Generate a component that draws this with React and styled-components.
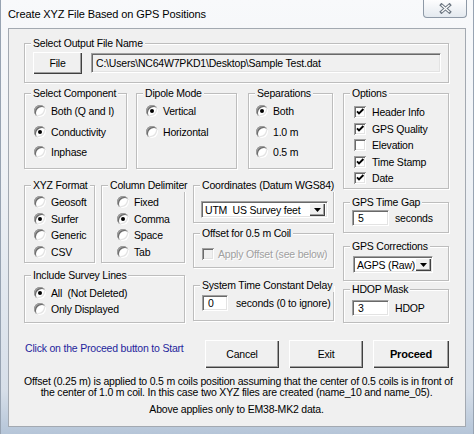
import React from 'react';
import styled, { createGlobalStyle } from 'styled-components';

const Global = createGlobalStyle`
  html, body { margin: 0; padding: 0; background: #fff; }
  body {
    width: 474px; height: 434px; overflow: hidden;
    font-family: "Liberation Sans", Arial, sans-serif;
    font-size: 10.5px; letter-spacing: -0.2px; color: #000;
  }
  * { box-sizing: border-box; }
`;

const Window = styled.div`
  width: 474px; height: 434px;
  display: flex; flex-direction: column;
  padding: 0 8px 7px 8px;
  background: linear-gradient(180deg, #f8f9fb 0px, #eef1f5 180px, #d7dfe9 390px, #b5c5d8 434px);
  box-shadow: inset 1px 0 0 #97a3b2, inset -1px 0 0 #97a3b2;
`;

const TitleBar = styled.div`
  height: 28px; flex: none;
  display: flex; align-items: flex-start; justify-content: space-between;
`;

const Title = styled.div`
  margin-top: 8px;
  font-size: 11px; letter-spacing: -0.1px; line-height: 12px;
  color: #000;
`;

const CloseBtn = styled.div`
  width: 44px; height: 18px; margin-right: -1px;
  border: 1px solid #8e99a7; border-top: none;
  border-radius: 0 0 4px 4px;
  background: linear-gradient(180deg, #fdfdfe, #e4e9ef);
  display: flex; align-items: center; justify-content: center;
`;

const Client = styled.div`
  flex: 1;
  border: 1px solid #a3a9b1;
  background: #f0f0f0;
  padding: 14px 16px 0 15px;
  display: flex; flex-direction: column;
`;

const Box = styled.div`
  position: relative; flex: none;
  width: ${p => p.$w}px; height: ${p => p.$h}px;
  margin-left: ${p => p.$ml || 0}px;
  border: 1px solid #bdbdbd;
  box-shadow: inset 1px 1px 0 #fff, 1px 1px 0 #fff;
  padding: ${p => p.$pad || '0'};
  display: flex; flex-direction: ${p => p.$row ? 'row' : 'column'};
  align-items: ${p => p.$row ? 'center' : 'stretch'};
  gap: ${p => p.$gap || 0}px;
`;

const Legend = styled.span`
  position: absolute; top: -7px; left: 6px;
  padding: 0 2px; background: #f0f0f0;
  line-height: 13px; white-space: nowrap;
`;

const Group = ({ label, children, ...rest }) => (
  <Box {...rest}>
    <Legend>{label}</Legend>
    {children}
  </Box>
);

const Main = styled.div`
  display: flex; align-items: flex-start; gap: 9px;
  margin-top: 10px;
`;

const Column = styled.div`
  display: flex; flex-direction: column;
  width: ${p => p.$w}px; flex: none;
`;

const Row = styled.div`
  display: flex; align-items: flex-start;
  gap: ${p => p.$gap || 0}px;
  margin-top: ${p => p.$mt || 0}px;
`;

const Spacer = styled.div`
  height: ${p => p.$h}px; flex: none;
`;

const ChoiceRow = styled.div`
  display: flex; align-items: center; gap: ${p => p.$gap || 5}px;
  height: 14px; line-height: 14px; white-space: pre;
  color: ${p => p.$disabled ? '#a0a0a0' : '#000'};
  text-shadow: ${p => p.$disabled ? '1px 1px 0 #fff' : 'none'};
`;

const RadioMark = styled.span`
  width: 12px; height: 12px; flex: none; position: relative;
  border-radius: 50%; background: #fff;
  box-shadow: inset 1px 1px 0 #a0a0a0, inset -1px -1px 0 #fff,
    inset 2px 2px 0 #6b6b6b, inset -2px -2px 0 #e3e3e3;
  &::after {
    content: ''; display: ${p => p.$on ? 'block' : 'none'};
    position: absolute; left: 4px; top: 4px;
    width: 4px; height: 4px; border-radius: 50%; background: #000;
  }
`;

const CheckMark = styled.span`
  width: 12px; height: 12px; flex: none;
  display: flex; align-items: center; justify-content: center;
  background: ${p => p.$disabled ? '#f0f0f0' : '#fff'};
  box-shadow: inset 1px 1px 0 #a0a0a0, inset -1px -1px 0 #fff,
    inset 2px 2px 0 #6b6b6b, inset -2px -2px 0 #e3e3e3;
`;

const Choice = ({ type = 'radio', on, disabled, gap, children }) => (
  <ChoiceRow $disabled={disabled} $gap={gap}>
    {type === 'radio' ? (
      <RadioMark $on={on} />
    ) : (
      <CheckMark $disabled={disabled}>
        {on && (
          <svg width="12" height="12" viewBox="0 0 12 12">
            <path d="M3 5.4 L5 7.4 L9.4 3" stroke="#000" strokeWidth="1.9" fill="none" />
          </svg>
        )}
      </CheckMark>
    )}
    <span>{children}</span>
  </ChoiceRow>
);

const sunken = `
  border: 1px solid; border-color: #a0a0a0 #fff #fff #a0a0a0;
  box-shadow: inset 1px 1px 0 #696969, inset -1px -1px 0 #e3e3e3;
`;

const Field = styled.div`
  ${sunken}
  width: ${p => p.$w}px; height: ${p => p.$h || 16}px; flex: none;
  background: ${p => p.$ro ? '#f0f0f0' : '#fff'};
  padding-left: ${p => p.$pl || 4}px;
  display: flex; align-items: center;
  white-space: pre; line-height: 12px;
`;

const SelectBox = styled.div`
  ${sunken}
  width: ${p => p.$w}px; height: 17px; flex: none;
  background: #fff;
  display: flex; align-items: center; justify-content: space-between;
  padding: 2px 2px 2px 3px;
  white-space: pre;
`;

const ArrowBtn = styled.span`
  width: 16px; height: 13px; flex: none;
  background: #f0f0f0;
  box-shadow: inset 1px 1px 0 #fff, inset -1px -1px 0 #404040, inset -2px -2px 0 #a0a0a0;
  display: flex; align-items: center; justify-content: center;
`;

const Select = ({ w, children }) => (
  <SelectBox $w={w}>
    <span>{children}</span>
    <ArrowBtn>
      <svg width="7" height="4" viewBox="0 0 7 4"><path d="M0 0 H7 L3.5 4 Z" fill="#000" /></svg>
    </ArrowBtn>
  </SelectBox>
);

const Unit = styled.span`
  margin-left: ${p => p.$ml}px; white-space: nowrap; line-height: 12px;
`;

const Btn = styled.button`
  width: ${p => p.$w}px; height: ${p => p.$h || 28}px; flex: none;
  border: none; padding: 0; margin: 0;
  background: #f0f0f0;
  font-family: "Liberation Sans", Arial, sans-serif;
  font-size: ${p => p.$bold ? '11px' : '10.5px'};
  font-weight: ${p => p.$bold ? 700 : 400};
  letter-spacing: -0.2px; color: #000;
  box-shadow: inset 1px 1px 0 #fff, inset -1px -1px 0 #404040, inset -2px -2px 0 #a0a0a0;
`;

const ActionRow = styled.div`
  display: flex; align-items: flex-start;
  margin-top: 17px;
`;

const Hint = styled.div`
  flex: 1; margin-top: 2px; padding-left: 1px;
  line-height: 12px; color: #1f1f9c;
`;

const Buttons = styled.div`
  display: flex; gap: 10px;
`;

const Notes = styled.div`
  margin-top: 8px; text-align: center;
  line-height: 11px; white-space: nowrap;
`;

const NoteP = styled.p`
  margin: 0;
  & + & { margin-top: 6px; }
`;

export default function App() {
  return (
    <>
      <Global />
      <Window>
        <TitleBar>
          <Title>Create XYZ File Based on GPS Positions</Title>
          <CloseBtn>
            <svg width="13" height="11" viewBox="0 0 13 11">
              <path d="M2.5 2 L10.5 9 M10.5 2 L2.5 9" stroke="#6c7682" strokeWidth="3.2" strokeLinecap="square" fill="none" />
              <path d="M2.5 2 L10.5 9 M10.5 2 L2.5 9" stroke="#fff" strokeWidth="1.2" fill="none" />
            </svg>
          </CloseBtn>
        </TitleBar>
        <Client>
          <Group label="Select Output File Name" $w={425} $h={40} $row $pad="0 0 0 8px" $gap={9}>
            <Btn $w={49} $h={22}>File</Btn>
            <Field $w={350} $h={20} $ro>C:\Users\NC64W7PKD1\Desktop\Sample Test.dat</Field>
          </Group>

          <Main>
            <Column $w={310}>
              <Row $gap={9}>
                <Group label="Select Component" $w={103} $h={76} $pad="10px 0 0 9px" $gap={6.5}>
                  <Choice>Both (Q and I)</Choice>
                  <Choice on>Conductivity</Choice>
                  <Choice>Inphase</Choice>
                </Group>
                <Group label="Dipole Mode" $w={101} $h={76} $pad="10px 0 0 9px" $gap={6.5}>
                  <Choice on>Vertical</Choice>
                  <Choice>Horizontal</Choice>
                </Group>
                <Group label="Separations" $w={85} $h={76} $ml={2} $pad="10px 0 0 7px" $gap={6.5}>
                  <Choice on>Both</Choice>
                  <Choice>1.0 m</Choice>
                  <Choice>0.5 m</Choice>
                </Group>
              </Row>
              <Row $gap={8} $mt={16}>
                <Column $w={161}>
                  <Row $gap={6}>
                    <Group label="XYZ Format" $w={71} $h={78} $pad="9px 0 0 9px" $gap={2.7}>
                      <Choice>Geosoft</Choice>
                      <Choice on>Surfer</Choice>
                      <Choice>Generic</Choice>
                      <Choice>CSV</Choice>
                    </Group>
                    <Group label="Column Delimiter" $w={84} $h={78} $pad="9px 0 0 15px" $gap={2.7}>
                      <Choice>Fixed</Choice>
                      <Choice on>Comma</Choice>
                      <Choice>Space</Choice>
                      <Choice>Tab</Choice>
                    </Group>
                  </Row>
                  <Spacer $h={12} />
                  <Group label="Include Survey Lines" $w={161} $h={48} $pad="10px 0 0 9px" $gap={2}>
                    <Choice on>All  (Not Deleted)</Choice>
                    <Choice>Only Displayed</Choice>
                  </Group>
                </Column>
                <Column $w={141}>
                  <Group label="Coordinates (Datum WGS84)" $w={141} $h={38} $pad="15px 0 0 7px">
                    <Select w={127}>UTM  US Survey feet</Select>
                  </Group>
                  <Spacer $h={10} />
                  <Group label="Offset for 0.5 m Coil" $w={141} $h={35} $pad="13px 0 0 8px">
                    <Choice type="check" disabled gap={4}>Apply Offset (see below)</Choice>
                  </Group>
                  <Spacer $h={17} />
                  <Group label="System Time Constant Delay" $w={141} $h={36} $row $pad="0 0 0 8px">
                    <Field $w={26} $pl={5}>0</Field>
                    <Unit $ml={8}>seconds (0 to ignore)</Unit>
                  </Group>
                </Column>
              </Row>
            </Column>

            <Column $w={106}>
              <Group label="Options" $w={106} $h={96} $pad="11px 0 0 10px" $gap={2.5}>
                <Choice type="check" on gap={6}>Header Info</Choice>
                <Choice type="check" on gap={6}>GPS Quality</Choice>
                <Choice type="check" gap={6}>Elevation</Choice>
                <Choice type="check" on gap={6}>Time Stamp</Choice>
                <Choice type="check" on gap={6}>Date</Choice>
              </Group>
              <Spacer $h={13} />
              <Group label="GPS Time Gap" $w={106} $h={31} $row $pad="1px 0 0 8px">
                <Field $w={37} $pl={5}>5</Field>
                <Unit $ml={6}>seconds</Unit>
              </Group>
              <Spacer $h={13} />
              <Group label="GPS Corrections" $w={106} $h={35} $pad="9px 0 0 9px">
                <Select w={80}>AGPS (Raw)</Select>
              </Group>
              <Spacer $h={8} />
              <Group label="HDOP Mask" $w={106} $h={34} $row $pad="3px 0 0 8px">
                <Field $w={37} $pl={5}>3</Field>
                <Unit $ml={6}>HDOP</Unit>
              </Group>
            </Column>
          </Main>

          <ActionRow>
            <Hint>Click on the Proceed button to Start</Hint>
            <Buttons>
              <Btn $w={74}>Cancel</Btn>
              <Btn $w={74}>Exit</Btn>
              <Btn $w={76} $bold>Proceed</Btn>
            </Buttons>
          </ActionRow>

          <Notes>
            <NoteP>
              Offset (0.25 m) is applied to 0.5 m coils position assuming that the center of 0.5 coils is in front of
              <br />
              the center of 1.0 m coil. In this case two XYZ files are created (name_10 and name_05).
            </NoteP>
            <NoteP>Above applies only to EM38-MK2 data.</NoteP>
          </Notes>
        </Client>
      </Window>
    </>
  );
}
